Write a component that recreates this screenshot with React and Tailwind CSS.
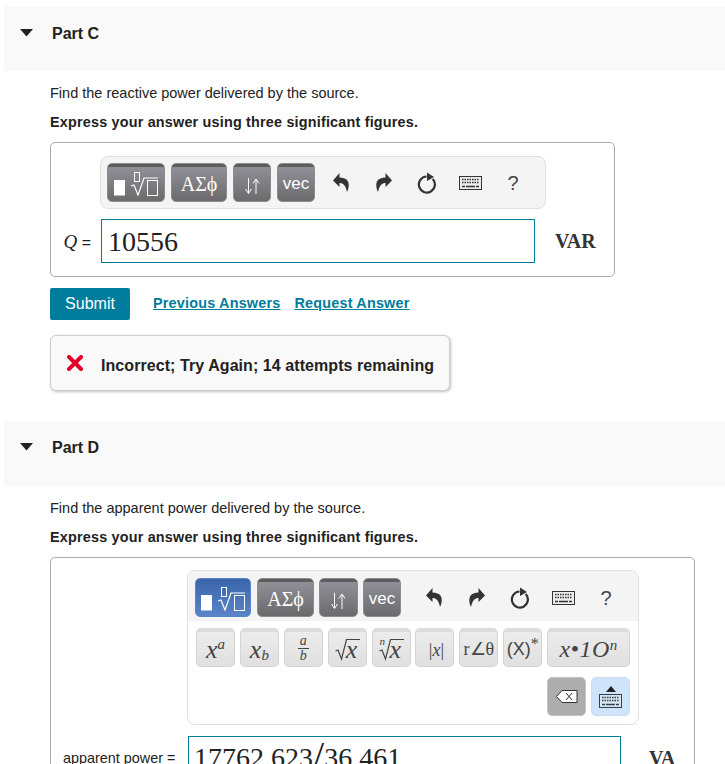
import { Fragment } from 'react'

const serif = { fontFamily: '"Liberation Serif", serif' }

function PartHeader({ label, className }) {
  return (
    <div className={`ml-[4px] h-[65px] bg-[#f9f9f9] flex items-start ${className}`}>
      <svg width="13" height="8" viewBox="0 0 13 8" className="ml-[16px] mt-[4px] text-[#222]">
        <path d="M0 0h13L6.5 7.5z" fill="currentColor" />
      </svg>
      <span className="ml-[19px] text-[16px] leading-[18px] font-bold text-[#222]">{label}</span>
    </div>
  )
}

function Undo() {
  return (
    <svg width="16" height="19" viewBox="0 0 16 19" fill="#333">
      <path d="M6.5 0 L0 7.5 L6.5 14 V10 C10 10 12.5 12 14 19 C15.5 16 16.5 12 15 8.5 C13.5 5.5 10 4.5 6.5 4.5 Z" />
    </svg>
  )
}

function Redo() {
  return (
    <svg width="16" height="19" viewBox="0 0 16 19" fill="#333">
      <path d="M9.5 0 L16 7.5 L9.5 14 V10 C6 10 3.5 12 2 19 C0.5 16 -0.5 12 1 8.5 C2.5 5.5 6 4.5 9.5 4.5 Z" />
    </svg>
  )
}

function Reset() {
  return (
    <svg width="20" height="22" viewBox="0 0 20 22" fill="none">
      <path d="M9.5 4.5 A8 8 0 1 0 15.7 7" stroke="#333" strokeWidth="2.2" />
      <path d="M10 0.5 L17 5 L10 9 Z" fill="#333" />
    </svg>
  )
}

function Keyboard({ stroke = '#333', fill = '#eee' }) {
  return (
    <svg width="23" height="14" viewBox="0 0 23 14">
      <rect x="0.5" y="0.5" width="22" height="13" fill={fill} stroke={stroke} />
      <path d="M3 3.5h17M3 6.5h17" stroke={stroke} strokeWidth="1.4" strokeDasharray="1.5 1" />
      <path d="M3 10.5h3M7 10.5h9M17 10.5h3" stroke={stroke} strokeWidth="1.4" />
    </svg>
  )
}

function TemplateIcon() {
  return (
    <svg width="44" height="24" viewBox="0 0 44 24" fill="none" stroke="#fff" className="mt-[3px]">
      <rect x="0" y="8" width="11" height="15.5" fill="#fff" stroke="none" />
      <rect x="20.5" y="0.5" width="5" height="9" />
      <path d="M17 14l3-1 4 10 6-17h14" strokeWidth="1.2" />
      <rect x="33.5" y="8.5" width="10" height="15" />
    </svg>
  )
}

function ArrowsIcon() {
  return (
    <svg width="15" height="16" viewBox="0 0 15 16" fill="none" stroke="#fff" className="mt-[7px]">
      <path d="M3.5 0v15M0.5 11l3 4.5 3-4.5" />
      <path d="M11 16V1M8 5.5l3-4.5 3 4.5" />
    </svg>
  )
}

function DarkButton({ width, active, children, className = '' }) {
  const bg = active
    ? 'bg-gradient-to-b from-[#3a66ad] to-[#5b84c8] border-[#5b84c8]'
    : 'bg-gradient-to-b from-[#94939b] to-[#6b6b6d] border-[#8c8c8c]'
  return (
    <div className={`h-[39px] rounded-[5px] border flex items-center justify-center overflow-hidden relative text-white ${bg} ${width} ${className}`}>
      <span className={`absolute top-0 inset-x-0 h-[3px] ${active ? 'bg-[#3a66ad]' : 'bg-[#5d5d5f]'}`} />
      {children}
    </div>
  )
}

function Toolbar({ active, widths, gaps, iconsClass }) {
  return (
    <div className="flex items-center h-[39px]">
      <div className="flex">
        <DarkButton width={widths[0]} active={active}><TemplateIcon /></DarkButton>
        <DarkButton width={widths[1]} className={gaps[0]}><span className="text-[20px] mt-[2px]" style={serif}>ΑΣϕ</span></DarkButton>
        <DarkButton width={widths[2]} className={gaps[1]}><ArrowsIcon /></DarkButton>
        <DarkButton width={widths[3]} className={gaps[1]}><span className="text-[17px] mt-[2px]">vec</span></DarkButton>
      </div>
      <div className={`flex items-center text-[#444] ${iconsClass}`}>
        <span className="w-[32px] flex justify-center"><Undo /></span>
        <span className="w-[11px]" />
        <span className="w-[32px] flex justify-center"><Redo /></span>
        <span className="w-[11px]" />
        <span className="w-[32px] flex justify-center"><Reset /></span>
        <span className="w-[11px]" />
        <span className="w-[32px] flex justify-center"><Keyboard /></span>
        <span className="w-[11px]" />
        <span className="w-[32px] flex justify-center text-[20px]">?</span>
      </div>
    </div>
  )
}

function KeyButton({ width = 'w-[39px]', children }) {
  return (
    <div className={`h-[39px] rounded-[5px] border border-[#d4d4d4] border-t-[4px] border-t-[#dcdcdc] bg-gradient-to-b from-[#ececec] to-[#e0e0e0] flex items-center justify-center text-[#444] ${width}`} style={serif}>
      {children}
    </div>
  )
}

function Radical({ width }) {
  return (
    <svg width={width} height="24" viewBox={`0 0 ${width} 24`} fill="none" stroke="#444" className="shrink-0">
      <path d={`M0.5 14l2.5-1 3.5 9 5-19.5h${width - 11}`} strokeWidth="1.2" />
    </svg>
  )
}

function Keys() {
  return (
    <Fragment>
      <div className="flex gap-[4.9px] pl-[8px] pt-[7px]">
        <KeyButton><i className="text-[26px] leading-none mt-[1px]">x<sup className="text-[15px] -top-[9px]">a</sup></i></KeyButton>
        <KeyButton><i className="text-[26px] leading-none mt-[1px]">x<sub className="text-[15px] -bottom-[2px]">b</sub></i></KeyButton>
        <KeyButton>
          <span className="flex flex-col items-center text-[14px] italic leading-[14px] -mt-[2px]">
            <span className="px-[2px] border-b border-[#444]">a</span>
            <span>b</span>
          </span>
        </KeyButton>
        <KeyButton>
          <span className="relative flex items-center w-[25px]">
            <Radical width={25} />
            <i className="absolute left-[11px] top-[-3px] text-[26px] leading-[32px]">x</i>
          </span>
        </KeyButton>
        <KeyButton>
          <span className="relative flex items-center w-[25px]">
            <Radical width={25} />
            <i className="absolute left-[1px] -top-[1px] text-[11px] leading-[11px]">n</i>
            <i className="absolute left-[11px] top-[-3px] text-[26px] leading-[32px]">x</i>
          </span>
        </KeyButton>
        <KeyButton><span className="text-[18px] mt-[2px] ml-[3px]">|<i>x</i>|</span></KeyButton>
        <KeyButton><span className="text-[18px]">r∠θ</span></KeyButton>
        <KeyButton><span className="text-[18px] font-['Liberation_Sans']">(X)<sup className="text-[16px] -top-[6px]" style={serif}>*</sup></span></KeyButton>
        <KeyButton width="w-[83px]"><i className="text-[24px] leading-none tracking-[0.5px]">x•1O<sup className="text-[15px] -top-[7px]">n</sup></i></KeyButton>
      </div>
      <div className="flex justify-end gap-[5px] pr-[8px] pt-[10px]">
        <div className="w-[39px] h-[39px] rounded-[5px] border border-[#c4c4c4] bg-[#adadad] flex items-center justify-center">
          <svg width="22" height="13" viewBox="0 0 22 13" fill="#fff" stroke="#333">
            <path d="M6 0.5h15v12H6L0.5 6.5z" />
            <path d="M10 3l6 7M16 3l-6 7" fill="none" />
          </svg>
        </div>
        <div className="w-[39px] h-[39px] rounded-[5px] border border-[#c9dcf2] bg-[#cfe3fb] flex flex-col items-center justify-center gap-[2px]">
          <svg width="10" height="6" viewBox="0 0 10 6"><path d="M5 0l5 6H0z" fill="#222" /></svg>
          <Keyboard stroke="#2f4150" fill="#d9e4ef" />
        </div>
      </div>
    </Fragment>
  )
}

export default function App() {
  return (
    <div className="w-[725px] h-[764px] overflow-hidden bg-white pt-[6px] text-[#222] font-['Liberation_Sans',sans-serif]">
      <PartHeader label="Part C" className="pt-[19px]" />

      <div className="pl-[50px] pt-[14px]">
        <p className="text-[14.5px] leading-[16px]">Find the reactive power delivered by the source.</p>
        <p className="mt-[13px] text-[14.4px] leading-[16px] font-bold tracking-[0.19px]">Express your answer using three significant figures.</p>

        <div className="mt-[12px] w-[565px] h-[135px] rounded-[5px] border border-[#aaa] pt-[13px]">
          <div className="ml-[49px] w-[446px] h-[53px] rounded-[8px] border border-[#e0e0e0] bg-[#f4f4f4] pl-[6px] pt-[6px]">
            <Toolbar
              widths={['w-[58px]', 'w-[56px]', 'w-[38px]', 'w-[38px]']}
              gaps={['ml-[6px]', 'ml-[6px]']}
              iconsClass="ml-[10px]"
            />
          </div>
          <div className="mt-[10px] flex items-center">
            <span className="w-[50px] text-right pr-[10px] text-[16px] leading-none whitespace-nowrap"><i className="text-[19px]" style={serif}>Q</i> =</span>
            <div className="w-[434px] h-[44px] border border-[#007c9c] flex items-center pl-[6px] pt-[2px] text-[28px] text-[#222]" style={serif}>10556</div>
            <span className="ml-[20px] text-[20px] font-bold text-[#333]" style={serif}>VAR</span>
          </div>
        </div>

        <div className="mt-[11px] flex items-start">
          <button className="w-[80px] h-[32px] rounded-[2px] bg-[#007c9c] text-white text-[16px]">Submit</button>
          <a className="ml-[23px] mt-[6px] text-[14.4px] leading-[18px] font-bold tracking-[0.2px] underline text-[#007c9c]">Previous Answers</a>
          <a className="ml-[14px] mt-[6px] text-[14.4px] leading-[18px] font-bold tracking-[0.2px] underline text-[#007c9c]">Request Answer</a>
        </div>

        <div className="mt-[15px] w-[400px] h-[56px] rounded-[6px] border border-[#ccc] bg-[#f9f9f9] shadow-[1px_1px_3px_rgba(0,0,0,0.25)] flex items-center pl-[16px]">
          <svg width="16" height="16" viewBox="0 0 16 16">
            <path d="M2 2l12 12M14 2L2 14" stroke="#e4002b" strokeWidth="4" strokeLinecap="square" />
          </svg>
          <span className="ml-[18px] mt-[6px] text-[16px] font-bold tracking-[0.07px] whitespace-nowrap">Incorrect; Try Again; 14 attempts remaining</span>
        </div>
      </div>

      <div className="mt-[30px]">
        <PartHeader label="Part D" className="pt-[18px]" />
      </div>

      <div className="pl-[50px] pt-[14px]">
        <p className="text-[14.5px] leading-[16px]">Find the apparent power delivered by the source.</p>
        <p className="mt-[13px] text-[14.4px] leading-[16px] font-bold tracking-[0.19px]">Express your answer using three significant figures.</p>

        <div className="mt-[12px] w-[645px] h-[260px] rounded-[5px] border border-[#aaa] pt-[12px]">
          <div className="ml-[136px] w-[452px] h-[155px] rounded-[8px] border border-[#e0e0e0] overflow-hidden">
            <div className="h-[50px] bg-[#f4f4f4] pl-[7px] pt-[7px]">
              <Toolbar
                active
                widths={['w-[56px]', 'w-[57px]', 'w-[39px]', 'w-[38px]']}
                gaps={['ml-[6px]', 'ml-[5px]']}
                iconsClass="ml-[17px]"
              />
            </div>
            <Keys />
          </div>
          <div className="mt-[11px] flex items-start">
            <span className="w-[137px] pl-[12px] pt-[12px] text-[14.4px] whitespace-nowrap">apparent power =</span>
            <div className="w-[433px] h-[44px] border border-[#007c9c] pl-[5px] whitespace-nowrap flex items-start" style={serif}>
              <span className="text-[28px] leading-[36px] mt-[3px]">17762.623</span>
              <span className="text-[40px] leading-[40px] font-light -mt-[1px]">/</span>
              <span className="text-[28px] leading-[36px] mt-[3px]">36.461</span>
            </div>
            <span className="ml-[28px] pt-[7px] text-[20px] font-bold text-[#333]" style={serif}>VA</span>
          </div>
        </div>
      </div>
    </div>
  )
}
